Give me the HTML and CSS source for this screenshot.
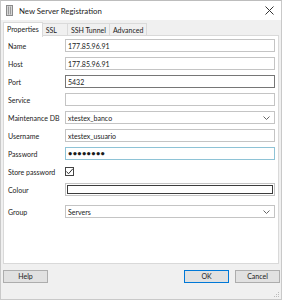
FILE: index.html
```html
<!DOCTYPE html>
<html lang="en">
<head>
    <meta charset="UTF-8">
    <meta name="viewport" content="width=device-width, initial-scale=1.0">
    <title>New Server Registration</title>
    <link rel="stylesheet" href="styles.css">
</head>
<body>
    <div class="window">
        <div class="titlebar">
            <svg class="app-icon" width="7" height="11" viewBox="0 0 7 11">
                <rect x="0.5" y="0.5" width="6" height="10" fill="#d8d8d8" stroke="#8a8a8a"/>
                <line x1="2.5" y1="1.5" x2="2.5" y2="9.5" stroke="#9a9a9a"/>
                <line x1="4.5" y1="1.5" x2="4.5" y2="9.5" stroke="#9a9a9a"/>
            </svg>
            <span class="title">New Server Registration</span>
            <svg class="close" width="9" height="9" viewBox="0 0 9 9">
                <path d="M0.5 0.5 L8.5 8.5 M8.5 0.5 L0.5 8.5" stroke="#333" stroke-width="1"/>
            </svg>
        </div>

        <div class="tabs">
            <div class="tab active">Properties</div>
            <div class="tab">SSL</div>
            <div class="tab">SSH Tunnel</div>
            <div class="tab">Advanced</div>
        </div>

        <form class="panel">
            <div class="form-group">
                <label for="name">Name</label>
                <input type="text" id="name" value="177.85.96.91">
            </div>
            <div class="form-group">
                <label for="host">Host</label>
                <input type="text" id="host" value="177.85.96.91">
            </div>
            <div class="form-group">
                <label for="port">Port</label>
                <input type="text" id="port" class="hover" value="5432">
            </div>
            <div class="form-group">
                <label for="service">Service</label>
                <input type="text" id="service" value="">
            </div>
            <div class="form-group">
                <label>Maintenance DB</label>
                <div class="select">
                    <span>xtestex_banco</span>
                    <svg width="7" height="4" viewBox="0 0 7 4"><path d="M0.5 0.5 L3.5 3.5 L6.5 0.5" fill="none" stroke="#666"/></svg>
                </div>
            </div>
            <div class="form-group">
                <label for="username">Username</label>
                <input type="text" id="username" value="xtestex_usuario">
            </div>
            <div class="form-group">
                <label for="password">Password</label>
                <input type="text" id="password" class="focus dots" value="••••••••">
            </div>
            <div class="form-group">
                <label>Store password</label>
                <span class="checkbox">
                    <svg width="9" height="9" viewBox="0 0 9 9"><path d="M1.5 4.5 L3.5 6.8 L7.8 1.8" fill="none" stroke="#333" stroke-width="1"/></svg>
                </span>
            </div>
            <div class="form-group">
                <label>Colour</label>
                <div class="colour"><div class="swatch"></div></div>
            </div>
            <div class="form-group group-row">
                <label>Group</label>
                <div class="select">
                    <span>Servers</span>
                    <svg width="7" height="4" viewBox="0 0 7 4"><path d="M0.5 0.5 L3.5 3.5 L6.5 0.5" fill="none" stroke="#666"/></svg>
                </div>
            </div>
        </form>

        <div class="footer">
            <button type="button">Help</button>
            <div class="right">
                <button type="button" class="default">OK</button>
                <button type="button">Cancel</button>
            </div>
        </div>

        <svg class="grip" width="6" height="6" viewBox="0 0 6 6">
            <rect x="4" y="0" width="1" height="1" fill="#bbb"/>
            <rect x="2" y="2" width="1" height="1" fill="#bbb"/>
            <rect x="4" y="2" width="1" height="1" fill="#bbb"/>
            <rect x="0" y="4" width="1" height="1" fill="#bbb"/>
            <rect x="2" y="4" width="1" height="1" fill="#bbb"/>
            <rect x="4" y="4" width="1" height="1" fill="#bbb"/>
        </svg>
    </div>
</body>
</html>
```

FILE: styles.css
```css
* {
    box-sizing: border-box;
}
body {
    margin: 0;
    font-family: Lato, "Noto Sans", sans-serif;
    font-size: 7px;
    color: #1a1a1a;
    background: #fff;
}
.window {
    width: 282px;
    height: 300px;
    background: #f0f0f0;
    border: 1px solid #c9c9c9;
    border-top: 1px solid #bdbdbd;
    display: flex;
    flex-direction: column;
}
.titlebar {
    height: 19px;
    background: #fff;
    display: flex;
    align-items: center;
    padding: 0 7px 0 5px;
}
.app-icon {
    margin-right: 6px;
}
.title {
    font-size: 7.8px;
    flex: 1;
    color: #222;
}
.tabs {
    display: flex;
    padding: 2px 0 0 2px;
    height: 16px;
}
.tab {
    padding: 0 3px;
    line-height: 13px;
    height: 14px;
    margin-top: 1px;
    border: 1px solid #dadada;
    border-bottom: none;
    margin-left: -1px;
    color: #222;
    white-space: nowrap;
}
.tab:nth-child(2) {
    padding-right: 10px;
}
.tab.active {
    background: #fff;
    height: 15px;
    margin-top: 0;
    margin-left: 0;
    position: relative;
    z-index: 1;
}
.panel {
    margin: -1px 2px 0 2px;
    height: 229px;
    background: #fff;
    border: 1px solid #d9d9d9;
    padding: 3px 3px 0 4px;
    display: flex;
    flex-direction: column;
    gap: 5px;
}
.form-group {
    display: flex;
    align-items: center;
    height: 13px;
}
.group-row {
    margin-top: 4px;
}
label {
    width: 57px;
    flex: none;
    color: #222;
    white-space: nowrap;
}
input, .select, .colour {
    flex: 1;
    height: 13px;
    border: 1px solid #c4c4c4;
    padding: 0 2px;
    font-family: inherit;
    font-size: 7px;
    color: #1a1a1a;
    background: #fff;
    outline: none;
}
input.hover {
    border-color: #767676;
}
input.focus {
    border-color: #8ec3d6;
}
input.dots {
    font-size: 7.5px;
    letter-spacing: 0.3px;
    font-weight: bold;
}
.select {
    display: flex;
    align-items: center;
    justify-content: space-between;
    padding-right: 4px;
}
.checkbox {
    width: 9px;
    height: 9px;
    border: 1px solid #444;
    display: flex;
    align-items: center;
    justify-content: center;
}
.checkbox svg {
    flex: none;
}
.colour {
    padding: 1px;
}
.swatch {
    height: 100%;
    border: 1px solid #3c3c3c;
}
.footer {
    display: flex;
    justify-content: space-between;
    padding: 6px 1px 0 2px;
}
.right {
    display: flex;
    gap: 6px;
}
button {
    width: 45px;
    height: 13px;
    background: #e1e1e1;
    border: 1px solid #adadad;
    font-family: inherit;
    font-size: 7px;
    color: #1a1a1a;
    padding: 0;
    line-height: 11px;
}
button.default {
    border-color: #0078d7;
}
.grip {
    margin-top: auto;
    margin-bottom: 1px;
    margin-right: 1px;
    align-self: flex-end;
}
```
